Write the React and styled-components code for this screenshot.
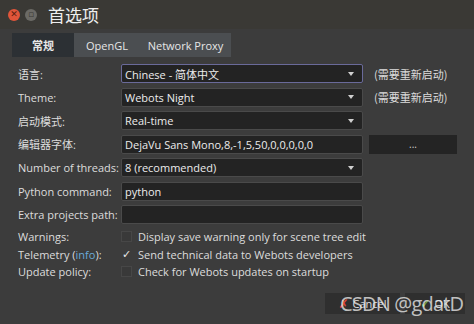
import React from "react";
import styled, { createGlobalStyle } from "styled-components";

const Global = createGlobalStyle`
  html, body { margin: 0; padding: 0; background: #3c3c3c; }
  body {
    font-family: "Open Sans", "Noto Sans", "Noto Sans CJK SC", sans-serif;
    font-size: 11px;
    color: #dedede;
  }
`;

const Window = styled.div`
  width: 474px;
  height: 324px;
  background: #3c3c3c;
  position: relative;
  overflow: hidden;
  display: flex;
  flex-direction: column;
`;

const TitleBar = styled.div`
  height: 29px;
  background: #3a3935;
  display: flex;
  align-items: center;
  padding-left: 8px;
  gap: 5px;
`;

const WinBtn = styled.div`
  width: 12px;
  height: 12px;
  border-radius: 50%;
  background: ${(p) => (p.close ? "#e0553a" : "#6b6a66")};
  display: flex;
  align-items: center;
  justify-content: center;
  color: ${(p) => (p.close ? "#5a1e10" : "#3a3935")};
  font-size: 9px;
  line-height: 1;
  font-family: "DejaVu Sans", sans-serif;
`;

const Title = styled.div`
  margin-left: 6px;
  font-size: 17px;
  color: #eeeeee;
  font-family: "Noto Sans CJK SC", sans-serif;
`;

const Body = styled.div`
  flex: 1;
  padding: 4px 9px 0 12px;
  display: flex;
  flex-direction: column;
`;

const Tabs = styled.div`
  display: flex;
  height: 24px;
`;

const Tab = styled.div`
  display: flex;
  align-items: center;
  justify-content: center;
  width: ${(p) => p.w}px;
  background: ${(p) => (p.active ? "#2c3034" : "#4b4e51")};
  color: #e6e6e6;
  font-size: 11px;
  font-weight: ${(p) => (p.active ? 700 : 400)};
`;

const Form = styled.div`
  display: grid;
  grid-template-columns: 97px 242px auto;
  column-gap: 6px;
  row-gap: 4.5px;
  padding: 7px 0 0 6px;
  align-items: center;
`;

const Label = styled.div`
  font-size: 11px;
  color: #dcdcdc;
  white-space: nowrap;
`;

const Field = styled.div`
  height: 19px;
  box-sizing: border-box;
  background: #232323;
  border: 1px solid ${(p) => (p.focus ? "#6a6a9a" : "#4a4a4a")};
  border-radius: 2px;
  display: flex;
  align-items: center;
  padding: 0 3px;
  color: #ececec;
  font-size: 11px;
  white-space: nowrap;
  overflow: hidden;
`;

const Arrow = styled.span`
  margin-left: auto;
  width: 0;
  height: 0;
  border-left: 3.5px solid transparent;
  border-right: 3.5px solid transparent;
  border-top: 4px solid #d0d0d0;
  margin-right: 5px;
`;

const Note = styled.div`
  color: #dcdcdc;
  font-size: 11px;
  padding-left: 5px;
  font-family: "Noto Sans CJK SC", sans-serif;
`;

const DotsButton = styled.div`
  width: 88px;
  height: 19px;
  background: #242424;
  display: flex;
  align-items: center;
  justify-content: center;
  color: #cfcfcf;
  font-size: 10px;
`;

const Checks = styled.div`
  display: grid;
  grid-template-columns: 97px auto;
  grid-auto-rows: 17.5px;
  column-gap: 6px;
  padding: 4px 0 0 6px;
  align-items: center;
`;

const CheckRow = styled.div`
  display: flex;
  align-items: center;
  gap: 6px;
`;

const Box = styled.div`
  width: 11px;
  height: 11px;
  box-sizing: border-box;
  border: 1px solid ${(p) => (p.checked ? "transparent" : "#474747")};
  background: ${(p) => (p.checked ? "transparent" : "#393939")};
  display: flex;
  align-items: center;
  justify-content: center;
  color: #e8e8e8;
  font-size: 11px;
  font-family: "DejaVu Sans", sans-serif;
`;

const Link = styled.span`
  color: #6aaad8;
`;

const Footer = styled.div`
  margin-top: auto;
  display: flex;
  justify-content: flex-end;
  gap: 5px;
  padding: 0 0 10px 0;
`;

const Button = styled.div`
  width: ${(p) => p.w}px;
  height: 21px;
  background: #2f2f2f;
  display: flex;
  align-items: center;
  justify-content: center;
  gap: 4px;
  color: #dedede;
  font-size: 11px;
`;

const Mark = styled.span`
  color: ${(p) => p.color};
  font-size: 12px;
  font-family: "DejaVu Sans", sans-serif;
`;

const Watermark = styled.div`
  position: absolute;
  left: 340px;
  top: 290px;
  font-size: 20px;
  color: rgba(232, 232, 232, 0.8);
  font-family: "Open Sans", sans-serif;
  letter-spacing: -0.8px;
  pointer-events: none;
`;

const combo = (text, focus) => (
  <Field focus={focus}>
    {text}
    <Arrow />
  </Field>
);

export default function App() {
  return (
    <Window>
      <Global />
      <TitleBar>
        <WinBtn close>✕</WinBtn>
        <WinBtn>▫</WinBtn>
        <Title>首选项</Title>
      </TitleBar>
      <Body>
        <Tabs>
          <Tab w={62} active>常规</Tab>
          <Tab w={66}>OpenGL</Tab>
          <Tab w={91}>Network Proxy</Tab>
        </Tabs>
        <Form>
          <Label>语言:</Label>
          {combo("Chinese - 简体中文", true)}
          <Note>(需要重新启动)</Note>

          <Label>Theme:</Label>
          {combo("Webots Night")}
          <Note>(需要重新启动)</Note>

          <Label>启动模式:</Label>
          {combo("Real-time")}
          <div />

          <Label>编辑器字体:</Label>
          <Field>DejaVu Sans Mono,8,-1,5,50,0,0,0,0,0</Field>
          <DotsButton>...</DotsButton>

          <Label>Number of threads:</Label>
          {combo("8 (recommended)")}
          <div />

          <Label>Python command:</Label>
          <Field>python</Field>
          <div />

          <Label>Extra projects path:</Label>
          <Field />
          <div />
        </Form>
        <Checks>
          <Label>Warnings:</Label>
          <CheckRow>
            <Box />
            <Label>Display save warning only for scene tree edit</Label>
          </CheckRow>
          <Label>
            Telemetry (<Link>info</Link>):
          </Label>
          <CheckRow>
            <Box checked>✓</Box>
            <Label>Send technical data to Webots developers</Label>
          </CheckRow>
          <Label>Update policy:</Label>
          <CheckRow>
            <Box />
            <Label>Check for Webots updates on startup</Label>
          </CheckRow>
        </Checks>
        <Footer>
          <Button w={75}>
            <Mark color="#e0463a">✗</Mark>Cancel
          </Button>
          <Button w={60}>
            <Mark color="#6fbf4a">✓</Mark>OK
          </Button>
        </Footer>
      </Body>
      <Watermark>CSDN @gdatD</Watermark>
    </Window>
  );
}
